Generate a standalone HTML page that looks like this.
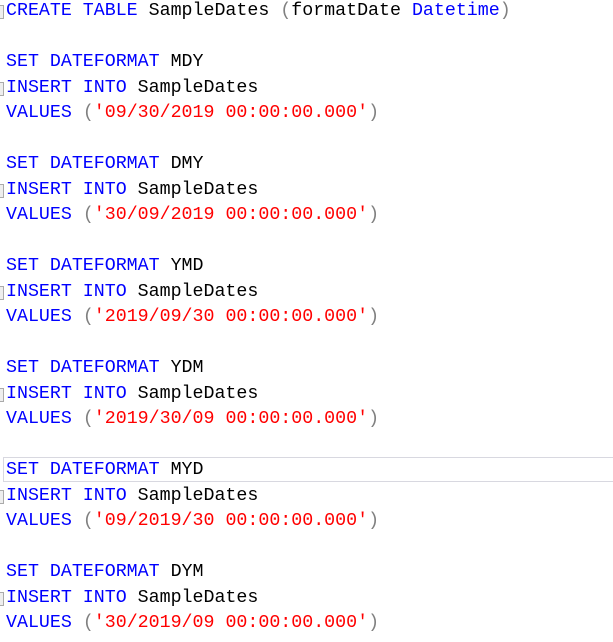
<!DOCTYPE html>
<html><head><style>
html,body{margin:0;padding:0;background:#fff;width:613px;height:642px;overflow:hidden}
.c{position:absolute;left:6px;top:-1px;font-family:"Liberation Mono",monospace;font-size:18.3px;line-height:25.5px;white-space:pre;color:#000}
.k{color:#0000ff}.s{color:#ff0000}.g{color:#808080}
.m{position:absolute;left:0;width:3px;height:12px;border:1px solid #aaa;border-left:none;background:#eee}
.hl{position:absolute;left:3px;top:457px;width:612px;height:25px;border:1px solid #d8d8e0;box-sizing:border-box}
</style></head><body>
<div class="hl"></div>
<div class="m" style="top:5px"></div>
<div class="m" style="top:82px"></div>
<div class="m" style="top:184px"></div>
<div class="m" style="top:286px"></div>
<div class="m" style="top:388px"></div>
<div class="m" style="top:490px"></div>
<div class="m" style="top:592px"></div>
<div class="c"><span class="k">CREATE TABLE</span> SampleDates <span class="g">(</span>formatDate <span class="k">Datetime</span><span class="g">)</span>

<span class="k">SET DATEFORMAT</span> MDY
<span class="k">INSERT INTO</span> SampleDates
<span class="k">VALUES</span> <span class="g">(</span><span class="s">'09/30/2019 00:00:00.000'</span><span class="g">)</span>

<span class="k">SET DATEFORMAT</span> DMY
<span class="k">INSERT INTO</span> SampleDates
<span class="k">VALUES</span> <span class="g">(</span><span class="s">'30/09/2019 00:00:00.000'</span><span class="g">)</span>

<span class="k">SET DATEFORMAT</span> YMD
<span class="k">INSERT INTO</span> SampleDates
<span class="k">VALUES</span> <span class="g">(</span><span class="s">'2019/09/30 00:00:00.000'</span><span class="g">)</span>

<span class="k">SET DATEFORMAT</span> YDM
<span class="k">INSERT INTO</span> SampleDates
<span class="k">VALUES</span> <span class="g">(</span><span class="s">'2019/30/09 00:00:00.000'</span><span class="g">)</span>

<span class="k">SET DATEFORMAT</span> MYD
<span class="k">INSERT INTO</span> SampleDates
<span class="k">VALUES</span> <span class="g">(</span><span class="s">'09/2019/30 00:00:00.000'</span><span class="g">)</span>

<span class="k">SET DATEFORMAT</span> DYM
<span class="k">INSERT INTO</span> SampleDates
<span class="k">VALUES</span> <span class="g">(</span><span class="s">'30/2019/09 00:00:00.000'</span><span class="g">)</span></div>
</body></html>
